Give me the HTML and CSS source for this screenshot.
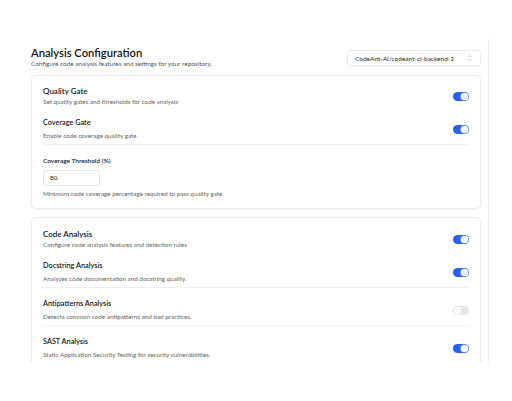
FILE: index.html
```html
<!DOCTYPE html>
<html>
<head>
<meta charset="utf-8">
<link rel="stylesheet" href="styles.css">
</head>
<body>
<div class="frame">
  <header class="page-head">
    <div>
      <h1 class="page-title">Analysis Configuration</h1>
      <p class="page-sub">Configure code analysis features and settings for your repository.</p>
    </div>
    <div class="select">
      <span>CodeAnt-AI/codeant-ci-backend-2</span>
      <svg class="chev" width="5" height="8" viewBox="0 0 5 8"><path d="M1 3 L2.5 1.5 L4 3 M1 5 L2.5 6.5 L4 5" fill="none" stroke="#b5b5b5" stroke-width="0.8"/></svg>
    </div>
  </header>

  <section class="card">
    <div class="card-head">
      <div>
        <div class="title">Quality Gate</div>
        <div class="desc">Set quality gates and thresholds for code analysis</div>
      </div>
      <span class="toggle on"></span>
    </div>
    <div class="row">
      <div>
        <div class="title sm">Coverage Gate</div>
        <div class="desc">Enable code coverage quality gate</div>
      </div>
      <span class="toggle on"></span>
    </div>
    <div class="threshold">
      <div class="label">Coverage Threshold (%)</div>
      <div class="input">80</div>
      <div class="desc help">Minimum code coverage percentage required to pass quality gate</div>
    </div>
  </section>

  <section class="card">
    <div class="card-head">
      <div>
        <div class="title">Code Analysis</div>
        <div class="desc">Configure code analysis features and detection rules</div>
      </div>
      <span class="toggle on"></span>
    </div>
    <div class="row">
      <div>
        <div class="title sm">Docstring Analysis</div>
        <div class="desc">Analyzes code documentation and docstring quality.</div>
      </div>
      <span class="toggle on"></span>
    </div>
    <div class="row">
      <div>
        <div class="title sm">Antipatterns Analysis</div>
        <div class="desc">Detects common code antipatterns and bad practices.</div>
      </div>
      <span class="toggle"></span>
    </div>
    <div class="row last">
      <div>
        <div class="title sm">SAST Analysis</div>
        <div class="desc">Static Application Security Testing for security vulnerabilities.</div>
      </div>
      <span class="toggle on"></span>
    </div>
  </section>
</div>
</body>
</html>
```

FILE: styles.css
```css
* { box-sizing: border-box; }
html, body { margin: 0; padding: 0; background: #fff; }
body {
  font-family: "Lato", "Noto Sans", sans-serif;
  color: #161616;
}
.frame {
  margin: 38px 0 0 22px;
  width: 467px;
  height: 325px;
  border: 1px solid transparent;
  border-right-color: #f1f1f1;
  overflow: hidden;
  padding: 7px 7px 0 8px;
}
.page-head {
  display: flex;
  justify-content: space-between;
  align-items: flex-start;
  margin-bottom: 7px;
}
.page-title {
  margin: 0;
  font-size: 11.2px;
  line-height: 14px;
  font-weight: 600;
  color: #151515;
}
.page-sub {
  margin: 0;
  font-size: 6.4px;
  line-height: 8px;
  color: #555;
}
.select {
  margin-top: 4px;
  width: 134px;
  height: 16px;
  border: 1px solid #ebebeb;
  border-radius: 3px;
  box-shadow: 0 1px 2px rgba(0,0,0,0.04);
  display: flex;
  align-items: center;
  justify-content: space-between;
  padding: 0 8px 0 7px;
  font-size: 6.5px;
  color: #2a2a2a;
}
.card {
  border: 1px solid #ececec;
  border-radius: 5px;
  box-shadow: 0 1px 2px rgba(0,0,0,0.05);
  padding: 10px 11px 10px;
  margin-bottom: 8px;
}
.card + .card { padding-top: 11px; }
.card-head {
  display: flex;
  justify-content: space-between;
  align-items: center;
}
.title {
  font-size: 8px;
  line-height: 10px;
  font-weight: 600;
  color: #151515;
  margin-bottom: 2px;
}
.title.sm { font-size: 7.3px; margin-bottom: 4px; }
.desc {
  font-size: 6.3px;
  line-height: 8px;
  color: #666;
}
.row {
  display: flex;
  justify-content: space-between;
  align-items: center;
  padding: 11px 0 4px;
  border-bottom: 1px solid #efefef;
}
.card-head + .row { margin-top: 1px; }
.row.last { border-bottom: none; }
.threshold { padding-top: 11px; }
.label {
  font-size: 6.5px;
  line-height: 10px;
  font-weight: 600;
  color: #1a1a1a;
}
.input {
  margin-top: 4px;
  width: 57px;
  height: 16px;
  border: 1px solid #e6e6e6;
  border-radius: 3px;
  font-size: 6.5px;
  line-height: 14px;
  padding-left: 6px;
  color: #222;
}
.help { margin-top: 4px; }
.toggle {
  position: relative;
  display: block;
  flex: none;
  width: 16px;
  height: 9px;
  border-radius: 5px;
  background: #e6e6e6;
}
.toggle::after {
  content: "";
  position: absolute;
  top: 1px;
  left: 1px;
  width: 7px;
  height: 7px;
  border-radius: 50%;
  background: #fff;
}
.toggle.on { background: #2563eb; }
.toggle.on::after {
  left: 8px;
  box-shadow: 0 0 0 0.6px #a9c2f7;
}
```
